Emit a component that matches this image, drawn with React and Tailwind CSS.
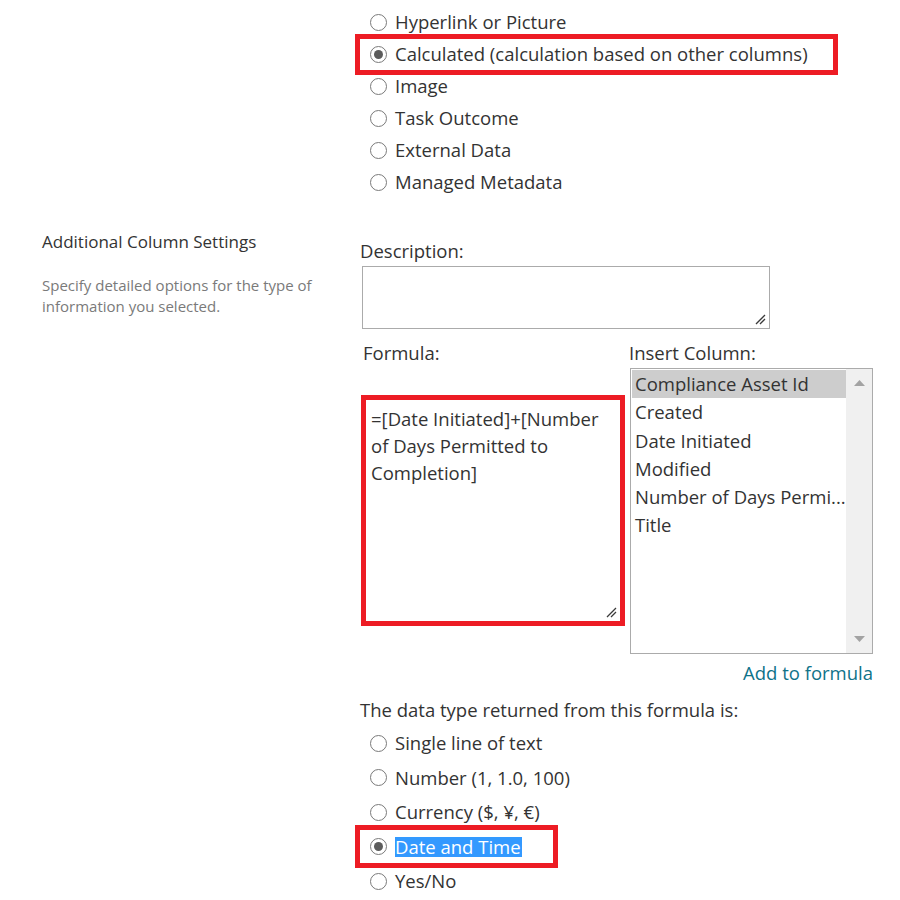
import React from 'react'

const typeOptions = [
    'Hyperlink or Picture',
    'Calculated (calculation based on other columns)',
    'Image',
    'Task Outcome',
    'External Data',
    'Managed Metadata'
]

const returnTypes = [
    'Single line of text',
    'Number (1, 1.0, 100)',
    'Currency ($, ¥, €)',
    'Date and Time',
    'Yes/No'
]

const columns = [
    'Compliance Asset Id',
    'Created',
    'Date Initiated',
    'Modified',
    'Number of Days Permi...',
    'Title'
]

function Radio({ checked }) {
    return (
        <span className="flex items-center justify-center w-[17px] h-[17px] rounded-full border border-[#7a7a7a] bg-white mr-[8px] shrink-0">
            {checked && <span className="w-[9px] h-[9px] rounded-full bg-[#5c5c5c]" />}
        </span>
    )
}

function Grip() {
    return (
        <svg className="absolute right-[3px] bottom-[3px]" width="12" height="12" viewBox="0 0 12 12">
            <path d="M2 11 L11 2 M6 11 L11 6" stroke="#3a3a3a" strokeWidth="1.3" />
        </svg>
    )
}

export default function App() {
    return (
        <div className="min-h-[900px] bg-white text-[#333] font-['Open_Sans',sans-serif] text-[18.5px]">
            {/* Name and type section (tail) */}
            <div className="flex pt-[6px]">
                <div className="w-[360px] shrink-0" />
                <div className="flex flex-col">
                    {typeOptions.map((opt, i) =>
                        i === 1 ? (
                            <div
                                key={opt}
                                className="flex items-center h-[41px] -my-[4.5px] -ml-[5px] w-[483px] border-[5px] border-[#ed1c24] pl-[10px]"
                            >
                                <Radio checked />
                                <span className="leading-[24px] whitespace-nowrap">{opt}</span>
                            </div>
                        ) : (
                            <div key={opt} className="flex items-center h-[32px] pl-[10px]">
                                <Radio />
                                <span className="leading-[24px]">{opt}</span>
                            </div>
                        )
                    )}
                </div>
            </div>

            {/* Additional Column Settings */}
            <div className="flex mt-[29px]">
                <div className="w-[360px] shrink-0 pl-[42px] pt-[3px]">
                    <div className="text-[17px] leading-[24px]">Additional Column Settings</div>
                    <div className="text-[15px] leading-[21px] text-[#7a7a7a] mt-[21px] w-[300px]">
                        Specify detailed options for the type of information you selected.
                    </div>
                </div>

                <div className="flex flex-col w-[513px]">
                    <div className="leading-[24px] pt-[12px]">Description:</div>
                    <div className="relative ml-[2px] mt-[3px] w-[408px] h-[63px] border border-[#ababab] bg-white">
                        <Grip />
                    </div>

                    <div className="flex gap-[4px] mt-[12px]">
                        <div className="flex flex-col w-[265px]">
                            <div className="leading-[24px] pl-[3px]">Formula:</div>
                            <div className="relative ml-[1px] mt-[30px] w-[264px] h-[231px] border-[5px] border-[#ed1c24] bg-white px-[5px] pt-[5px] leading-[27px]">
                                =[Date Initiated]+[Number of Days Permitted to Completion]
                                <Grip />
                            </div>
                        </div>

                        <div className="flex flex-col w-[244px]">
                            <div className="leading-[24px]">Insert Column:</div>
                            <div className="flex mt-[3px] ml-[1px] w-[243px] h-[286px] border border-[#ababab] bg-white">
                                <div className="flex-1 flex flex-col pt-[1px] pl-[1px] min-w-0">
                                    {columns.map((c, i) => (
                                        <div
                                            key={c}
                                            className={`h-[28.3px] leading-[28px] pl-[3px] whitespace-nowrap overflow-hidden ${i === 0 ? 'bg-[#cdcdcd]' : ''}`}
                                        >
                                            {c}
                                        </div>
                                    ))}
                                </div>
                                <div className="w-[26px] bg-[#f0f0f0] flex flex-col justify-between items-center py-[11px]">
                                    <svg width="11" height="6" viewBox="0 0 11 6">
                                        <path d="M0 6 L5.5 0 L11 6 Z" fill="#a3a3a3" />
                                    </svg>
                                    <svg width="11" height="6" viewBox="0 0 11 6">
                                        <path d="M0 0 L5.5 6 L11 0 Z" fill="#a3a3a3" />
                                    </svg>
                                </div>
                            </div>
                            <div className="text-right text-[#0f7389] leading-[24px] mt-[7px]">Add to formula</div>
                        </div>
                    </div>

                    <div className="leading-[24px] mt-[13px]">The data type returned from this formula is:</div>
                    <div className="flex flex-col mt-[4px]">
                        {returnTypes.map((t, i) =>
                            i === 3 ? (
                                <div
                                    key={t}
                                    className="flex items-center h-[43px] -my-[4.25px] -ml-[5px] w-[203px] border-[5px] border-[#ed1c24] pl-[10px]"
                                >
                                    <Radio checked />
                                    <span className="leading-[20px] bg-[#3399ff] text-white pr-[1px] whitespace-nowrap">{t}</span>
                                </div>
                            ) : (
                                <div key={t} className="flex items-center h-[34.5px] pl-[10px]">
                                    <Radio />
                                    <span className="leading-[24px]">{t}</span>
                                </div>
                            )
                        )}
                    </div>
                </div>
            </div>
        </div>
    )
}
